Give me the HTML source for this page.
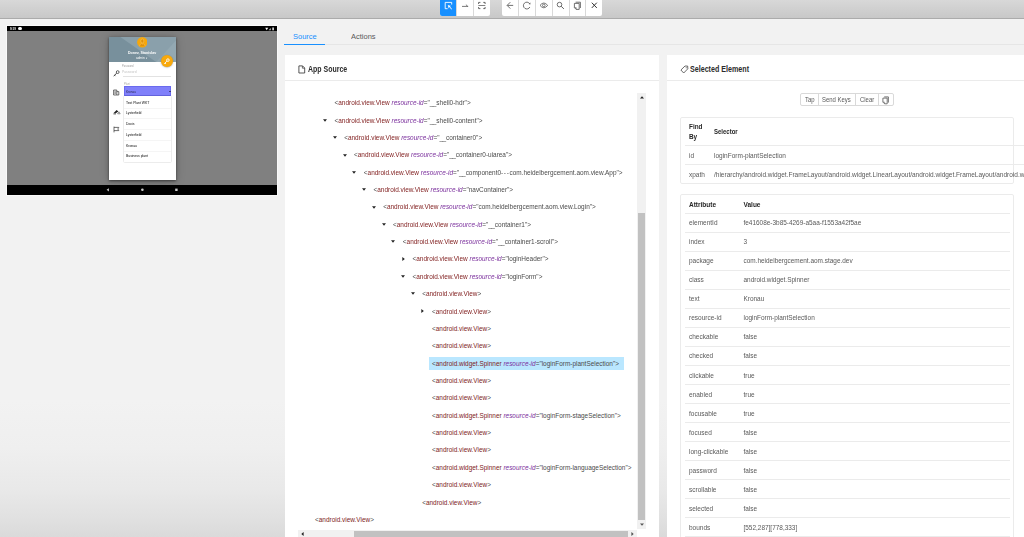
<!DOCTYPE html><html><head><meta charset="utf-8"><title>Appium</title><style>
*{box-sizing:border-box;margin:0;padding:0}
html,body{width:1024px;height:537px;overflow:hidden;background:#f2f2f2;font-family:"Liberation Sans",sans-serif;color:#595959}
.abs{position:absolute}
#topbar{position:absolute;left:0;top:0;width:1024px;height:18.9px;background:linear-gradient(#d8d8d8,#c8c8c8);border-bottom:1.2px solid #ababab}
.tb{position:absolute;top:-2px;height:17.8px;background:#fff;border-radius:2px;overflow:hidden}
.tb .b{position:absolute;top:0;height:100%;border-left:1px solid #d9d9d9}
.tb svg{position:absolute;overflow:visible}
.panel{position:absolute;background:#fff}
.t{position:absolute;white-space:nowrap;line-height:12px;height:12px}
.tree{font-size:6.45px;color:#4a4a4a}
.tree .tag{color:#7e1a1a}
.tree .u{letter-spacing:-0.55px;margin-right:0.55px}
.tree i{color:#7a2f9c;font-style:italic}

.ph{line-height:12px;height:12px;will-change:transform}
.hl{position:absolute;background:#bae7ff}
.line{position:absolute;height:1px;background:#ebebeb}
</style></head><body>
<div class="abs" style="left:0;top:400px;width:1024px;height:137px;background:linear-gradient(#f2f2f2 0%,#efefef 35%,#e9e9e9 65%,#e0e0e0 88%,#dadada 100%)"></div>
<div id="topbar"></div>
<div class="tb" style="left:439.8px;width:50.2px">
<div class="abs" style="left:0;top:0;width:16.4px;height:100%;background:#1890ff"></div>
<div class="b" style="left:16.6px"></div><div class="b" style="left:33.6px"></div>
</div>
<div class="tb" style="left:501.8px;width:100.4px">
<div class="b" style="left:16.7px"></div>
<div class="b" style="left:33.4px"></div>
<div class="b" style="left:50.1px"></div>
<div class="b" style="left:66.8px"></div>
<div class="b" style="left:83.5px"></div>
</div>
<svg class="abs" style="left:0;top:0" width="1024" height="19" viewBox="0 0 1024 19" fill="none" stroke-linecap="butt">
<path d="M451.7 4.6V2.4H445.2V8.7H447.6" stroke="#fff" stroke-width="0.9"/>
<path d="M447.8 4.9L451.2 6L449.8 6.6L452 8.9L451.4 9.4L449.3 7.1L448.7 8.4Z" fill="#fff"/>
<path d="M462 6.4H468.2M465.9 4.7L467.8 6.4" stroke="#4d4d4d" stroke-width="0.75"/>
<path d="M478.6 4V2.4H480.4M483.3 2.4H485.1V4M485.1 7V8.6H483.3M480.4 8.6H478.6V7" stroke="#4d4d4d" stroke-width="0.85"/>
<path d="M478.4 5.5H485.3" stroke="#4d4d4d" stroke-width="0.7"/>
<path d="M513.2 5.4H507.4M510.3 2.2L507.1 5.4L510.3 8.6" stroke="#4d4d4d" stroke-width="0.8"/>
<path d="M529.9 7A3.4 3.4 0 1 1 529.6 3.6" stroke="#4d4d4d" stroke-width="0.8"/>
<path d="M530.4 2.6L530.3 4.5L528.6 4.1Z" fill="#4d4d4d"/>
<path d="M540 5.4Q543.8 0.6 547.7 5.4Q543.8 10.2 540 5.4Z" stroke="#4d4d4d" stroke-width="0.75"/>
<circle cx="543.8" cy="5.4" r="1.3" stroke="#4d4d4d" stroke-width="0.7"/>
<circle cx="559.5" cy="4.6" r="2.3" stroke="#4d4d4d" stroke-width="0.8"/>
<path d="M561.2 6.3L563.9 8.9" stroke="#4d4d4d" stroke-width="0.9"/>
<path d="M575.6 2.2H580.4V8" stroke="#4d4d4d" stroke-width="0.8"/>
<path d="M574.4 3.4H579.2V9.4H576.2L574.4 7.6Z" stroke="#4d4d4d" stroke-width="0.8"/>
<path d="M574.4 7.6H576.2V9.4" stroke="#4d4d4d" stroke-width="0.6"/>
<path d="M591.8 2.7L596.8 7.9M596.8 2.7L591.8 7.9" stroke="#333" stroke-width="1"/>
</svg>
<div class="abs" style="left:7px;top:25.8px;width:270px;height:169px;background:#808080;box-shadow:0 0 0 1px rgba(255,255,255,.55)"></div>
<div class="abs" style="left:7px;top:25.8px;width:270px;height:5.2px;background:#000"></div>
<div class="abs" style="left:7px;top:184.7px;width:270px;height:10.1px;background:#000"></div>
<div class="t ph" style="left:9.8px;top:23.4px;font-size:2.9px;color:#fff;font-weight:bold">9:19</div>
<div class="abs" style="left:18.2px;top:26.8px;width:3.6px;height:3.6px;border-radius:50%;background:#fff"></div>
<svg class="abs" style="left:264.6px;top:26.7px" width="10" height="4" viewBox="0 0 10 4"><path d="M0.2 0.8L3.2 0.8L1.7 3.2Z" fill="#fff"/><path d="M3.6 3.2L5.8 3.2L5.8 1Z" fill="#bbb"/><rect x="7.4" y="0.5" width="1.4" height="2.8" fill="#fff"/></svg>
<svg class="abs" style="left:100px;top:186px" width="90" height="8" viewBox="100 186 90 8"><path d="M108.9 188.2V191.4L106.6 189.8Z" fill="#cfcfcf"/><circle cx="142.4" cy="189.8" r="1.3" fill="#cfcfcf"/><rect x="175.2" y="188.6" width="2.4" height="2.4" fill="#cfcfcf"/></svg>
<div class="abs" style="left:108.5px;top:36.7px;width:67.5px;height:142.9px;background:#fff;box-shadow:0 0.6px 2.4px rgba(0,0,0,.5),0 1px 9px rgba(0,0,0,.22)"></div>
<svg class="abs" style="left:108.5px;top:36.7px" width="67.5" height="25" viewBox="0 0 67.5 25"><rect width="67.5" height="25" fill="#78909c"/><path d="M11.4 0H67.5V25H47.2Z" fill="#8aa0ab"/><path d="M67.5 3V25H47.2Z" fill="#93a8b2"/></svg>
<svg class="abs" style="left:136.9px;top:37.3px" width="10.6" height="10.6" viewBox="0 0 10.6 10.6"><circle cx="5.3" cy="5.3" r="5.2" fill="#f6a70c"/><ellipse cx="5.3" cy="4" rx="1.55" ry="2" fill="#e09209" stroke="#fbd690" stroke-width="0.35"/><path d="M2.5 9.3Q2.7 7 4.6 6.6L5.3 7.2L6 6.6Q7.9 7 8.1 9.3" fill="#e09209" stroke="#fbd690" stroke-width="0.35"/></svg>
<div class="t ph" style="left:127.9px;top:46.7px;font-size:3.55px;color:#fff;font-weight:bold">Donev, Stanislav</div>
<div class="t ph" style="left:136px;top:51.8px;font-size:3.2px;color:#fff">admin <span style="font-size:2.2px">&#9660;</span></div>
<div class="abs" style="left:160.9px;top:55.2px;width:12px;height:12px;border-radius:50%;background:#f8a90c;box-shadow:0 0.5px 1.5px rgba(0,0,0,.35)"></div>
<svg class="abs" style="left:163.4px;top:57.8px" width="7" height="7" viewBox="0 0 7 7"><circle cx="4.9" cy="2.1" r="1.3" fill="none" stroke="#fff" stroke-width="0.9"/><path d="M3.9 3.1L1.2 5.8M2 5L2.9 5.9" stroke="#fff" stroke-width="0.9" fill="none"/></svg>
<svg class="abs" style="left:112.6px;top:70px" width="7" height="7" viewBox="0 0 7 7"><circle cx="4.7" cy="2.1" r="1.4" fill="none" stroke="#3c3c3c" stroke-width="0.8"/><path d="M3.7 3.2L0.7 6M1.5 5.2L2.4 6.1" stroke="#3c3c3c" stroke-width="1" fill="none"/></svg>
<div class="t ph" style="left:122.3px;top:60.5px;font-size:2.6px;color:#999">Password</div>
<div class="t ph" style="left:122.3px;top:65.8px;font-size:3.3px;color:#c4c4c4">Password</div>
<div class="abs" style="left:122.8px;top:76px;width:48.3px;height:0.6px;background:#e2e2e2"></div>
<div class="t ph" style="left:123.8px;top:78.9px;font-size:2.6px;color:#a9a9a0">Plant</div>
<svg class="abs" style="left:112.8px;top:89.2px" width="7" height="7" viewBox="0 0 7 7"><path d="M0.6 1H3.8V6H0.6ZM3.8 2.6H5.8V6H3.8" fill="none" stroke="#333" stroke-width="0.7"/><path d="M1.3 2.2H3.1M1.3 3.4H3.1M1.3 4.6H3.1" stroke="#333" stroke-width="0.5"/></svg>
<div class="abs" style="left:123.8px;top:86.1px;width:47.5px;height:10.1px;background:#8080fa;border:0.5px solid #6a6aee"></div>
<div class="t ph" style="left:125.6px;top:85.6px;font-size:3.1px;color:#2a2a55">Kronau</div>
<svg class="abs" style="left:168.6px;top:90.7px" width="2" height="1.6" viewBox="0 0 2 1.6"><path d="M0 0H2L1 1.4Z" fill="#223"/></svg>
<div class="abs" style="left:123.8px;top:96.2px;width:47.5px;height:65.6px;background:#fff;box-shadow:0 0.4px 1.2px rgba(0,0,0,.35)"></div>
<div class="t ph" style="left:125.8px;top:96.50px;font-size:3.4px;color:#0a0a0a">Test Plant WKT</div>
<div class="abs" style="left:124.3px;top:107.60px;width:46.5px;height:0.5px;background:#f5f5f5"></div>
<div class="t ph" style="left:125.8px;top:107.28px;font-size:3.4px;color:#0a0a0a">Lysterfield</div>
<div class="abs" style="left:124.3px;top:118.38px;width:46.5px;height:0.5px;background:#f5f5f5"></div>
<div class="t ph" style="left:125.8px;top:118.06px;font-size:3.4px;color:#0a0a0a">Davis</div>
<div class="abs" style="left:124.3px;top:129.16px;width:46.5px;height:0.5px;background:#f5f5f5"></div>
<div class="t ph" style="left:125.8px;top:128.84px;font-size:3.4px;color:#0a0a0a">Lysterfield</div>
<div class="abs" style="left:124.3px;top:139.94px;width:46.5px;height:0.5px;background:#f5f5f5"></div>
<div class="t ph" style="left:125.8px;top:139.62px;font-size:3.4px;color:#0a0a0a">Kronau</div>
<div class="abs" style="left:124.3px;top:150.72px;width:46.5px;height:0.5px;background:#f5f5f5"></div>
<div class="t ph" style="left:125.8px;top:150.40px;font-size:3.4px;color:#0a0a0a">Business plant</div>
<svg class="abs" style="left:112.6px;top:109px" width="8" height="6" viewBox="0 0 8 6"><path d="M0.4 4.2L3.6 1L5.4 2.6L2.4 4.6Z" fill="#222"/><path d="M4.6 4.8H7.2L6 2.8Z" fill="none" stroke="#333" stroke-width="0.5"/><path d="M0.4 5H3" stroke="#222" stroke-width="0.6"/></svg>
<svg class="abs" style="left:112.8px;top:125.6px" width="7" height="7" viewBox="0 0 7 7"><path d="M1 0.6V6.4" stroke="#333" stroke-width="0.7"/><path d="M1 1.4H5.8L4.8 3L5.8 4.6H1" fill="none" stroke="#333" stroke-width="0.7"/></svg>
<div class="t" style="left:292.7px;top:31px;font-size:7.9px;transform:scaleX(0.95);transform-origin:0 50%;color:#1890ff">Source</div>
<div class="t" style="left:351.3px;top:31px;font-size:7.9px;transform:scaleX(0.95);transform-origin:0 50%;color:#595959">Actions</div>
<div class="line" style="left:284.5px;top:44.2px;width:740px;background:#e6e6e6"></div>
<div class="abs" style="left:284.3px;top:43.9px;width:41px;height:1.4px;background:#1890ff"></div>
<div class="panel" style="left:284.8px;top:54.5px;width:374.3px;height:483px"></div>
<div class="line" style="left:284.8px;top:79.7px;width:374.3px"></div>
<div class="t" style="left:307.9px;top:63px;font-size:8.3px;font-weight:bold;color:#2b2b2b;transform:scaleX(0.841);transform-origin:0 50%">App Source</div>
<svg class="abs" style="left:297.8px;top:64.9px" width="8" height="9" viewBox="0 0 8 9" fill="none"><path d="M0.9 0.9H4.6L6.7 3V8H0.9Z" stroke="#3a3a3a" stroke-width="0.85"/><path d="M4.4 1V3.2H6.6" stroke="#3a3a3a" stroke-width="0.7"/></svg>
<div class="tree">
<div class="t" style="left:334.5px;top:97.2px">&lt;<span class="tag">android.view.View</span> <i>resource-id</i>="<span class="u">__</span>shell0-hdr"&gt;</div>
<svg class="abs" style="left:323.1px;top:118.8px" width="4" height="3" viewBox="0 0 4 3"><path d="M0 0.3H4L2 2.8Z" fill="#222"/></svg>
<div class="t" style="left:334.5px;top:114.6px">&lt;<span class="tag">android.view.View</span> <i>resource-id</i>="<span class="u">__</span>shell0-content"&gt;</div>
<svg class="abs" style="left:332.9px;top:136.1px" width="4" height="3" viewBox="0 0 4 3"><path d="M0 0.3H4L2 2.8Z" fill="#222"/></svg>
<div class="t" style="left:344.2px;top:131.9px">&lt;<span class="tag">android.view.View</span> <i>resource-id</i>="<span class="u">__</span>container0"&gt;</div>
<svg class="abs" style="left:342.6px;top:153.5px" width="4" height="3" viewBox="0 0 4 3"><path d="M0 0.3H4L2 2.8Z" fill="#222"/></svg>
<div class="t" style="left:354.0px;top:149.3px">&lt;<span class="tag">android.view.View</span> <i>resource-id</i>="<span class="u">__</span>container0-uiarea"&gt;</div>
<svg class="abs" style="left:352.4px;top:170.8px" width="4" height="3" viewBox="0 0 4 3"><path d="M0 0.3H4L2 2.8Z" fill="#222"/></svg>
<div class="t" style="left:363.8px;top:166.6px">&lt;<span class="tag">android.view.View</span> <i>resource-id</i>="<span class="u">__</span>component0<span style="letter-spacing:0.65px">---</span>com.heidelbergcement.aom.view.App"&gt;</div>
<svg class="abs" style="left:362.1px;top:188.2px" width="4" height="3" viewBox="0 0 4 3"><path d="M0 0.3H4L2 2.8Z" fill="#222"/></svg>
<div class="t" style="left:373.5px;top:184.0px">&lt;<span class="tag">android.view.View</span> <i>resource-id</i>="navContainer"&gt;</div>
<svg class="abs" style="left:371.9px;top:205.6px" width="4" height="3" viewBox="0 0 4 3"><path d="M0 0.3H4L2 2.8Z" fill="#222"/></svg>
<div class="t" style="left:383.2px;top:201.4px">&lt;<span class="tag">android.view.View</span> <i>resource-id</i>="com.heidelbergcement.aom.view.Login"&gt;</div>
<svg class="abs" style="left:381.6px;top:222.9px" width="4" height="3" viewBox="0 0 4 3"><path d="M0 0.3H4L2 2.8Z" fill="#222"/></svg>
<div class="t" style="left:393.0px;top:218.7px">&lt;<span class="tag">android.view.View</span> <i>resource-id</i>="<span class="u">__</span>container1"&gt;</div>
<svg class="abs" style="left:391.4px;top:240.3px" width="4" height="3" viewBox="0 0 4 3"><path d="M0 0.3H4L2 2.8Z" fill="#222"/></svg>
<div class="t" style="left:402.8px;top:236.1px">&lt;<span class="tag">android.view.View</span> <i>resource-id</i>="<span class="u">__</span>container1-scroll"&gt;</div>
<svg class="abs" style="left:401.7px;top:256.8px" width="3" height="4" viewBox="0 0 3 4"><path d="M0.3 0V4L2.8 2Z" fill="#222"/></svg>
<div class="t" style="left:412.5px;top:253.4px">&lt;<span class="tag">android.view.View</span> <i>resource-id</i>="loginHeader"&gt;</div>
<svg class="abs" style="left:401.1px;top:275.0px" width="4" height="3" viewBox="0 0 4 3"><path d="M0 0.3H4L2 2.8Z" fill="#222"/></svg>
<div class="t" style="left:412.5px;top:270.8px">&lt;<span class="tag">android.view.View</span> <i>resource-id</i>="loginForm"&gt;</div>
<svg class="abs" style="left:410.9px;top:292.4px" width="4" height="3" viewBox="0 0 4 3"><path d="M0 0.3H4L2 2.8Z" fill="#222"/></svg>
<div class="t" style="left:422.2px;top:288.2px">&lt;<span class="tag">android.view.View</span>&gt;</div>
<svg class="abs" style="left:421.2px;top:308.9px" width="3" height="4" viewBox="0 0 3 4"><path d="M0.3 0V4L2.8 2Z" fill="#222"/></svg>
<div class="t" style="left:432.0px;top:305.5px">&lt;<span class="tag">android.view.View</span>&gt;</div>
<div class="t" style="left:432.0px;top:322.9px">&lt;<span class="tag">android.view.View</span>&gt;</div>
<div class="t" style="left:432.0px;top:340.2px">&lt;<span class="tag">android.view.View</span>&gt;</div>
<div class="hl" style="left:429px;top:356.5px;width:195.2px;height:13px"></div>
<div class="t" style="left:432.0px;top:357.6px">&lt;<span class="tag">android.widget.Spinner</span> <i>resource-id</i>="loginForm-plantSelection"&gt;</div>
<div class="t" style="left:432.0px;top:375.0px">&lt;<span class="tag">android.view.View</span>&gt;</div>
<div class="t" style="left:432.0px;top:392.3px">&lt;<span class="tag">android.view.View</span>&gt;</div>
<div class="t" style="left:432.0px;top:409.7px">&lt;<span class="tag">android.widget.Spinner</span> <i>resource-id</i>="loginForm-stageSelection"&gt;</div>
<div class="t" style="left:432.0px;top:427.0px">&lt;<span class="tag">android.view.View</span>&gt;</div>
<div class="t" style="left:432.0px;top:444.4px">&lt;<span class="tag">android.view.View</span>&gt;</div>
<div class="t" style="left:432.0px;top:461.8px">&lt;<span class="tag">android.widget.Spinner</span> <i>resource-id</i>="loginForm-languageSelection"&gt;</div>
<div class="t" style="left:432.0px;top:479.1px">&lt;<span class="tag">android.view.View</span>&gt;</div>
<div class="t" style="left:422.2px;top:496.5px">&lt;<span class="tag">android.view.View</span>&gt;</div>
<div class="t" style="left:315.0px;top:513.8px">&lt;<span class="tag">android.view.View</span>&gt;</div>
</div>
<div class="abs" style="left:637px;top:92.9px;width:9.1px;height:435.8px;background:#f1f1f1"></div>
<div class="abs" style="left:638px;top:212.8px;width:7.2px;height:307.1px;background:#c1c1c1"></div>
<svg class="abs" style="left:639.6px;top:96.3px" width="4" height="3" viewBox="0 0 4 3"><path d="M0 2.6H4L2 0.3Z" fill="#222"/></svg>
<svg class="abs" style="left:639.6px;top:523px" width="4" height="3" viewBox="0 0 4 3"><path d="M0 0.4H4L2 2.7Z" fill="#555"/></svg>
<div class="abs" style="left:298px;top:529.6px;width:338.6px;height:8px;background:#f1f1f1"></div>
<div class="abs" style="left:354.3px;top:530.7px;width:273.7px;height:7px;background:#c1c1c1"></div>
<svg class="abs" style="left:301px;top:531.6px" width="3" height="4" viewBox="0 0 3 4"><path d="M2.6 0V4L0.3 2Z" fill="#222"/></svg>
<svg class="abs" style="left:631px;top:531.6px" width="3" height="4" viewBox="0 0 3 4"><path d="M0.4 0V4L2.7 2Z" fill="#555"/></svg>
<div class="panel" style="left:666.8px;top:54.5px;width:358px;height:483px"></div>
<div class="line" style="left:666.8px;top:79.7px;width:358px"></div>
<div class="t" style="left:689.8px;top:63px;font-size:8.3px;font-weight:bold;color:#2b2b2b;transform:scaleX(0.859);transform-origin:0 50%">Selected Element</div>
<svg class="abs" style="left:679.6px;top:64.5px" width="9" height="9" viewBox="0 0 9 9" fill="none"><path d="M0.9 5L5 1L7.7 1.1L7.8 3.8L3.7 8Z" stroke="#3a3a3a" stroke-width="0.75" stroke-linejoin="round"/><circle cx="6.2" cy="2.7" r="0.5" fill="#3a3a3a"/></svg>
<div class="abs" style="left:800.2px;top:93px;width:93.7px;height:12.9px;border:1px solid #d9d9d9;border-radius:2px;background:#fff"></div>
<div class="abs" style="left:817.6px;top:93px;width:1px;height:12.9px;background:#d9d9d9"></div>
<div class="abs" style="left:854.9px;top:93px;width:1px;height:12.9px;background:#d9d9d9"></div>
<div class="abs" style="left:877.9px;top:93px;width:1px;height:12.9px;background:#d9d9d9"></div>
<div class="t" style="left:804.5px;top:94.2px;font-size:6.5px;transform:scaleX(0.915);transform-origin:0 50%;color:#595959">Tap</div>
<div class="t" style="left:822.3px;top:94.2px;font-size:6.5px;transform:scaleX(0.915);transform-origin:0 50%;color:#595959">Send Keys</div>
<div class="t" style="left:859.7px;top:94.2px;font-size:6.5px;transform:scaleX(0.915);transform-origin:0 50%;color:#595959">Clear</div>
<svg class="abs" style="left:882.4px;top:95.8px" width="8" height="9" viewBox="0 0 8 9" fill="none"><path d="M2.2 0.9H6.4V6.6" stroke="#555" stroke-width="0.8"/><path d="M0.9 2.1H5.2V7.8H2.6L0.9 6.1Z" stroke="#555" stroke-width="0.8"/><path d="M0.9 6.1H2.6V7.8" stroke="#555" stroke-width="0.5"/></svg>
<div class="abs" style="left:680.3px;top:116.9px;width:334px;height:66.8px;border:1px solid #ebebeb;border-radius:2px"></div>
<div class="line" style="left:685.2px;top:145.3px;width:338.8px"></div>
<div class="line" style="left:685.2px;top:164.2px;width:338.8px"></div>
<div class="t" style="left:689px;top:121.2px;font-size:6.4px;font-weight:bold;color:#262626">Find</div>
<div class="t" style="left:689px;top:130.9px;font-size:6.4px;font-weight:bold;color:#262626">By</div>
<div class="t" style="left:714px;top:126px;font-size:6.4px;font-weight:bold;color:#262626;transform:scaleX(0.94);transform-origin:0 50%">Selector</div>
<div class="t" style="left:689px;top:150.1px;font-size:6.5px">id</div>
<div class="t" style="left:714px;top:150.1px;font-size:6.5px">loginForm-plantSelection</div>
<div class="t" style="left:689px;top:169.1px;font-size:6.5px">xpath</div>
<div class="t" style="left:714px;top:169.1px;font-size:6.5px;width:310px;overflow:hidden">/hierarchy/android.widget.FrameLayout/android.widget.LinearLayout/android.widget.FrameLayout/android.widget.LinearLayout/android.widget.FrameLayout</div>
<div class="abs" style="left:680.3px;top:194px;width:334px;height:360px;border:1px solid #ebebeb;border-radius:2px"></div>
<div class="t" style="left:689px;top:198.8px;font-size:6.5px;font-weight:bold;color:#262626">Attribute</div>
<div class="t" style="left:743.5px;top:198.8px;font-size:6.5px;font-weight:bold;color:#262626">Value</div>
<div class="line" style="left:685.2px;top:212.8px;width:324.6px"></div>
<div class="line" style="left:685.2px;top:231.8px;width:324.6px"></div>
<div class="line" style="left:685.2px;top:250.8px;width:324.6px"></div>
<div class="line" style="left:685.2px;top:269.9px;width:324.6px"></div>
<div class="line" style="left:685.2px;top:288.9px;width:324.6px"></div>
<div class="line" style="left:685.2px;top:307.9px;width:324.6px"></div>
<div class="line" style="left:685.2px;top:326.9px;width:324.6px"></div>
<div class="line" style="left:685.2px;top:345.9px;width:324.6px"></div>
<div class="line" style="left:685.2px;top:365.0px;width:324.6px"></div>
<div class="line" style="left:685.2px;top:384.0px;width:324.6px"></div>
<div class="line" style="left:685.2px;top:403.0px;width:324.6px"></div>
<div class="line" style="left:685.2px;top:422.0px;width:324.6px"></div>
<div class="line" style="left:685.2px;top:441.0px;width:324.6px"></div>
<div class="line" style="left:685.2px;top:460.1px;width:324.6px"></div>
<div class="line" style="left:685.2px;top:479.1px;width:324.6px"></div>
<div class="line" style="left:685.2px;top:498.1px;width:324.6px"></div>
<div class="line" style="left:685.2px;top:517.1px;width:324.6px"></div>
<div class="line" style="left:685.2px;top:536.1px;width:324.6px"></div>
<div class="t" style="left:689px;top:217.3px;font-size:6.5px">elementId</div>
<div class="t" style="left:743.5px;top:217.3px;font-size:6.45px">fe41608e-3b85-4269-a5aa-f1553a42f5ae</div>
<div class="t" style="left:689px;top:236.3px;font-size:6.5px">index</div>
<div class="t" style="left:743.5px;top:236.3px;font-size:6.45px">3</div>
<div class="t" style="left:689px;top:255.3px;font-size:6.5px">package</div>
<div class="t" style="left:743.5px;top:255.3px;font-size:6.45px">com.heidelbergcement.aom.stage.dev</div>
<div class="t" style="left:689px;top:274.4px;font-size:6.5px">class</div>
<div class="t" style="left:743.5px;top:274.4px;font-size:6.45px">android.widget.Spinner</div>
<div class="t" style="left:689px;top:293.4px;font-size:6.5px">text</div>
<div class="t" style="left:743.5px;top:293.4px;font-size:6.45px">Kronau</div>
<div class="t" style="left:689px;top:312.4px;font-size:6.5px">resource-id</div>
<div class="t" style="left:743.5px;top:312.4px;font-size:6.45px">loginForm-plantSelection</div>
<div class="t" style="left:689px;top:331.4px;font-size:6.5px">checkable</div>
<div class="t" style="left:743.5px;top:331.4px;font-size:6.45px">false</div>
<div class="t" style="left:689px;top:350.4px;font-size:6.5px">checked</div>
<div class="t" style="left:743.5px;top:350.4px;font-size:6.45px">false</div>
<div class="t" style="left:689px;top:369.5px;font-size:6.5px">clickable</div>
<div class="t" style="left:743.5px;top:369.5px;font-size:6.45px">true</div>
<div class="t" style="left:689px;top:388.5px;font-size:6.5px">enabled</div>
<div class="t" style="left:743.5px;top:388.5px;font-size:6.45px">true</div>
<div class="t" style="left:689px;top:407.5px;font-size:6.5px">focusable</div>
<div class="t" style="left:743.5px;top:407.5px;font-size:6.45px">true</div>
<div class="t" style="left:689px;top:426.5px;font-size:6.5px">focused</div>
<div class="t" style="left:743.5px;top:426.5px;font-size:6.45px">false</div>
<div class="t" style="left:689px;top:445.5px;font-size:6.5px">long-clickable</div>
<div class="t" style="left:743.5px;top:445.5px;font-size:6.45px">false</div>
<div class="t" style="left:689px;top:464.6px;font-size:6.5px">password</div>
<div class="t" style="left:743.5px;top:464.6px;font-size:6.45px">false</div>
<div class="t" style="left:689px;top:483.6px;font-size:6.5px">scrollable</div>
<div class="t" style="left:743.5px;top:483.6px;font-size:6.45px">false</div>
<div class="t" style="left:689px;top:502.6px;font-size:6.5px">selected</div>
<div class="t" style="left:743.5px;top:502.6px;font-size:6.45px">false</div>
<div class="t" style="left:689px;top:521.6px;font-size:6.5px">bounds</div>
<div class="t" style="left:743.5px;top:521.6px;font-size:6.45px">[552,287][778,333]</div>
</body></html>
